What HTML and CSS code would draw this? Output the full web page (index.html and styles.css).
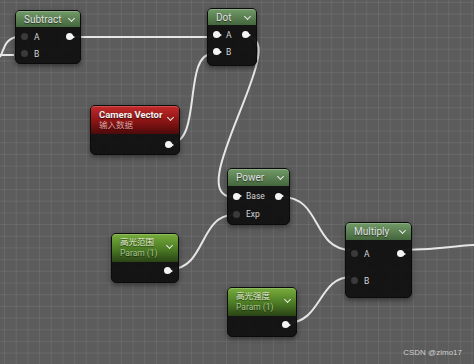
FILE: index.html
```html
<!DOCTYPE html>
<html lang="en">
<head>
    <meta charset="UTF-8">
    <meta name="viewport" content="width=device-width, initial-scale=1.0">
    <title>Material Graph</title>
    <link rel="stylesheet" href="styles.css">
</head>
<body>
    <div class="graph">
        <!-- wires sit under the nodes -->
        <svg class="wires" width="474" height="364" viewBox="0 0 474 364">
            <path d="M0 55 L14 55" />
            <path d="M0 57 C4 50, 4 40, 16 37" />
            <path d="M72 37 L212 37" />
            <path d="M247 37 C294 37, 180 197, 233 197" />
            <path d="M171 143 C202 143, 183 54, 212 54" />
            <path d="M171 269 C205 269, 200 215, 233 215" />
            <path d="M282 197 C322 197, 312 250, 351 250" />
            <path d="M287 323 C322 323, 318 277, 351 277" />
            <path d="M402 250 C440 250, 448 246, 474 245" />
        </svg>

        <div class="node n-subtract">
            <div class="node-head">Subtract <span class="chev"></span></div>
            <div class="node-body">
                <div class="row"><span class="pin"></span><span class="label">A</span><span class="pin on out"></span></div>
                <div class="row"><span class="pin"></span><span class="label">B</span></div>
            </div>
        </div>

        <div class="node n-dot">
            <div class="node-head">Dot <span class="chev"></span></div>
            <div class="node-body">
                <div class="row"><span class="pin on"></span><span class="label">A</span><span class="pin on out"></span></div>
                <div class="row"><span class="pin on"></span><span class="label">B</span></div>
            </div>
        </div>

        <div class="node n-camera">
            <div class="node-head head-red tall">
                <div class="head-text">
                    <div class="title">Camera Vector</div>
                    <div class="sub">输入数据</div>
                </div>
                <span class="chev"></span>
            </div>
            <div class="node-body">
                <div class="row"><span class="pin on out"></span></div>
            </div>
        </div>

        <div class="node n-power">
            <div class="node-head">Power <span class="chev"></span></div>
            <div class="node-body">
                <div class="row"><span class="pin on"></span><span class="label">Base</span><span class="pin on out"></span></div>
                <div class="row"><span class="pin"></span><span class="label">Exp</span></div>
            </div>
        </div>

        <div class="node n-range">
            <div class="node-head head-param tall">
                <div class="head-text">
                    <div class="title">高光范围</div>
                    <div class="sub">Param (1)</div>
                </div>
                <span class="chev"></span>
            </div>
            <div class="node-body">
                <div class="row"><span class="pin on out"></span></div>
            </div>
        </div>

        <div class="node n-strength">
            <div class="node-head head-param tall">
                <div class="head-text">
                    <div class="title">高光强度</div>
                    <div class="sub">Param (1)</div>
                </div>
                <span class="chev"></span>
            </div>
            <div class="node-body">
                <div class="row"><span class="pin on out"></span></div>
            </div>
        </div>

        <div class="node n-multiply">
            <div class="node-head">Multiply <span class="chev"></span></div>
            <div class="node-body">
                <div class="row"><span class="pin"></span><span class="label">A</span><span class="pin on out"></span></div>
                <div class="row"><span class="pin"></span><span class="label">B</span></div>
            </div>
        </div>

        <div class="watermark">CSDN @zimo17</div>
    </div>
</body>
</html>
```

FILE: styles.css
```css
body {
    margin: 0;
    padding: 0;
    font-family: Roboto, "Noto Sans CJK SC", sans-serif;
}

.graph {
    position: relative;
    width: 474px;
    height: 364px;
    overflow: hidden;
    background-color: #5c5c5c;
    background-image:
        linear-gradient(to right, rgba(255, 255, 255, 0.07) 1px, transparent 1px),
        linear-gradient(to bottom, rgba(255, 255, 255, 0.07) 1px, transparent 1px);
    background-size: 11.7px 11.7px;
    background-position: 4px 2px;
}

.wires {
    position: absolute;
    left: 0;
    top: 0;
}

.wires path {
    fill: none;
    stroke: #e6e6e6;
    stroke-width: 2;
}

/* nodes */
.node {
    position: absolute;
    background: rgba(18, 18, 18, 0.96);
    border: 1px solid #0b0b0b;
    border-radius: 5px;
    box-shadow: 0 2px 5px rgba(0, 0, 0, 0.45);
    color: #d8d8d8;
}

.node-head {
    position: relative;
    display: flex;
    align-items: center;
    height: 16px;
    padding-left: 8px;
    font-size: 10px;
    color: #e2e2e2;
    text-shadow: 0 1px 1px rgba(0, 0, 0, 0.6);
    border-radius: 4px 4px 0 0;
    background: linear-gradient(to bottom, #729b68, #44663d);
    box-shadow: inset 0 1px 0 rgba(255, 255, 255, 0.18);
}

.node-head.tall {
    height: 28px;
    align-items: flex-start;
}

.head-text {
    padding-top: 3px;
    line-height: 11px;
}

.head-red {
    background: linear-gradient(to bottom, #c42a2a, #8a1414 55%, #4c0b0b);
}

.head-red .title {
    font-weight: bold;
    font-size: 9.5px;
    color: #f2f2f2;
}

.head-red .sub {
    color: #e6a0a0;
    font-size: 8.5px;
}

.head-param {
    background: linear-gradient(to bottom, #78ad3c, #4b7a24 55%, #2a4416);
}

.head-param .title {
    font-size: 8.5px;
    color: #e4ecd8;
}

.head-param .sub {
    font-size: 8.5px;
    color: #a9c48e;
}

.chev {
    position: absolute;
    right: 6px;
    top: 5px;
    width: 4px;
    height: 4px;
    border-right: 1.6px solid #e8e8e8;
    border-bottom: 1.6px solid #e8e8e8;
    transform: rotate(45deg);
}

.tall .chev {
    top: 9px;
}

.node-body {
    padding: 1px 0 1px;
}

.row {
    display: flex;
    align-items: center;
    height: 17px;
    padding: 0 7px 0 5px;
    font-size: 8.5px;
    color: #d4d4d4;
}

.label {
    margin-left: 6px;
}

.pin {
    position: relative;
    width: 7px;
    height: 7px;
    border-radius: 50%;
    background: #3a3a3a;
}

.pin.on {
    background: #f4f4f4;
}

.pin.on::after {
    content: "";
    position: absolute;
    left: 6px;
    top: 1.5px;
    border-left: 3px solid #f4f4f4;
    border-top: 2px solid transparent;
    border-bottom: 2px solid transparent;
}

.pin.out {
    margin-left: auto;
}

/* canvas positions */
.n-subtract { left: 15px; top: 10px; width: 64px; }
.n-dot { left: 207px; top: 8px; width: 48px; }
.n-dot .node-body { padding-bottom: 5px; }
.n-camera { left: 90px; top: 105px; width: 88px; }
.n-camera .node-body { padding: 2px 0 1px; }
.n-power { left: 227px; top: 168px; width: 61px; }
.n-power .node-head { height: 17px; }
.n-power .row { height: 18px; }
.n-range { left: 111px; top: 233px; width: 66px; }
.n-range .node-body { padding: 0 0 3px; }
.n-strength { left: 227px; top: 287px; width: 68px; }
.n-strength .node-body { padding: 0 0 3px; }
.n-multiply { left: 345px; top: 222px; width: 65px; }
.n-multiply .node-head { height: 17px; }
.n-multiply .node-body { padding: 0 0 3px; }
.n-multiply .row { height: 27px; }

.watermark {
    position: absolute;
    right: 12px;
    bottom: 7px;
    font-family: "Liberation Sans", sans-serif;
    font-size: 8px;
    color: #cfcfcf;
}
```
